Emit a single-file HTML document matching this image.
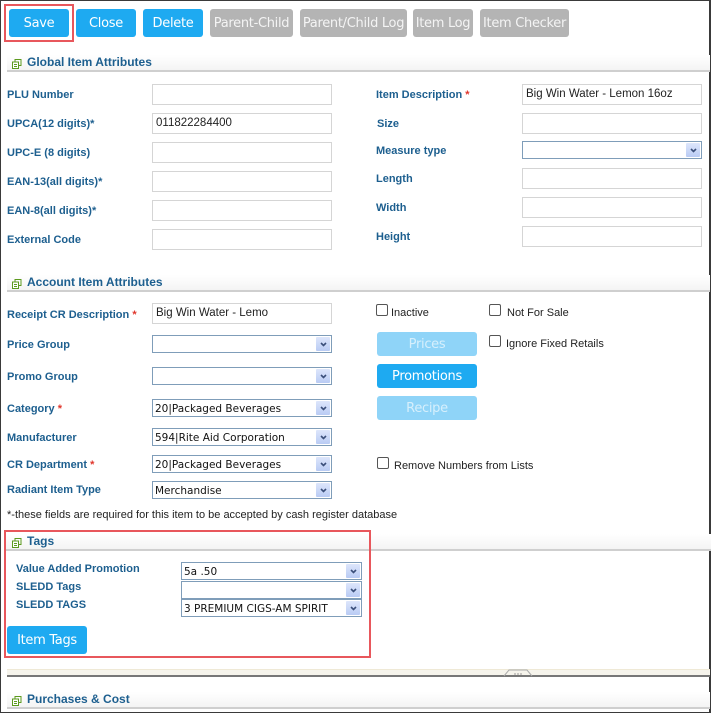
<!DOCTYPE html>
<html><head><meta charset="utf-8"><style>
*{box-sizing:border-box;margin:0;padding:0}
body{width:711px;height:713px;overflow:hidden;background:#fff;position:relative;font-family:"Liberation Sans",Arial,sans-serif}
.frame{position:absolute;left:0;top:0;width:711px;height:713px;border:1px solid #3a3a3a;border-right:2px solid #3a3a3a;border-bottom:1px solid #3a3a3a}
.a{position:absolute}
.btn{position:absolute;top:9px;height:28px;border-radius:3px;color:#fff;font-family:"DejaVu Sans","Liberation Sans",sans-serif;font-size:13px;text-align:center;line-height:30px;letter-spacing:-0.3px}
.b{background:#1eaaf1}.g{background:#b4b4b4;color:#f4f4f4}.l{background:#8fd4f8;color:#d6effc}
.hd{position:absolute;left:7px;right:1px;height:17px;background:linear-gradient(#fff,#f4f4f4);border-bottom:2px solid #cfcfcf;font-weight:bold;font-size:12px;color:#1d5f8f;padding-left:20px;line-height:15px}
.ic{position:absolute;left:5px;top:4px;width:10px;height:10px}
.lb{position:absolute;font-size:11px;font-weight:bold;color:#1d5f8f;margin-top:1px}
.lb i{color:#e0352b;font-style:normal}
.in{position:absolute;height:21px;border:1px solid #d5d5d5;font-size:11.5px;color:#222;padding:3px 0 0 3px;background:#fff}
.se{position:absolute;height:18px;border:1px solid #7f9db9;font-family:"DejaVu Sans",sans-serif;font-size:10.5px;color:#111;padding:3px 0 0 2px;background:#fff;white-space:nowrap}
.se:after{content:"";position:absolute;right:1px;top:1px;width:14px;height:14px;background:linear-gradient(#dde6fb,#b9cbf4);border-radius:1px}
.se b{position:absolute;right:4px;top:3px;width:7px;height:7px;z-index:2}
.cb{position:absolute;width:12px;height:12px;border:1px solid #555;border-radius:2px;background:#fff}
.ct{position:absolute;font-size:11px;color:#222;margin-top:1px}
</style></head><body>
<div class="frame"></div>
<div class="a" style="left:4px;top:4px;width:70px;height:38px;border:2px solid #e8575c"></div>
<div class="btn b" style="left:9px;width:60px">Save</div>
<div class="btn b" style="left:76px;width:60px">Close</div>
<div class="btn b" style="left:143px;width:60px">Delete</div>
<div class="btn g" style="left:210px;width:83px">Parent-Child</div>
<div class="btn g" style="left:300px;width:107px">Parent/Child Log</div>
<div class="btn g" style="left:413px;width:60px">Item Log</div>
<div class="btn g" style="left:480px;width:89px">Item Checker</div>

<div class="hd" style="top:55px"><svg class="ic" viewBox="0 0 10 10"><rect x="3" y="0.5" width="6" height="6" fill="none" stroke="#5c9a1e"/><rect x="0.5" y="3" width="6" height="6.5" fill="#fff" stroke="#5c9a1e"/><line x1="2" y1="5.5" x2="5" y2="5.5" stroke="#5c9a1e"/><line x1="2" y1="7.5" x2="5" y2="7.5" stroke="#5c9a1e"/></svg>Global Item Attributes</div>

<div class="lb" style="left:7px;top:88px">PLU Number</div><div class="in" style="left:152px;top:84px;width:180px"></div>
<div class="lb" style="left:7px;top:117px">UPCA(12 digits)*</div><div class="in" style="left:152px;top:113px;width:180px">011822284400</div>
<div class="lb" style="left:7px;top:146px">UPC-E (8 digits)</div><div class="in" style="left:152px;top:142px;width:180px"></div>
<div class="lb" style="left:7px;top:175px">EAN-13(all digits)*</div><div class="in" style="left:152px;top:171px;width:180px"></div>
<div class="lb" style="left:7px;top:204px">EAN-8(all digits)*</div><div class="in" style="left:152px;top:200px;width:180px"></div>
<div class="lb" style="left:7px;top:233px">External Code</div><div class="in" style="left:152px;top:229px;width:180px"></div>

<div class="lb" style="left:376px;top:88px">Item Description <i>*</i></div><div class="in" style="left:522px;top:84px;width:180px">Big Win Water - Lemon 16oz</div>
<div class="lb" style="left:377px;top:117px">Size</div><div class="in" style="left:522px;top:113px;width:180px"></div>
<div class="lb" style="left:376px;top:144px">Measure type</div><div class="se" style="left:522px;top:141px;width:180px"><b><svg viewBox="0 0 7 7"><path d="M1 2l2.5 2.5L6 2" stroke="#3b4f7a" stroke-width="1.6" fill="none"/></svg></b></div>
<div class="lb" style="left:376px;top:172px">Length</div><div class="in" style="left:522px;top:168px;width:180px"></div>
<div class="lb" style="left:376px;top:201px">Width</div><div class="in" style="left:522px;top:197px;width:180px"></div>
<div class="lb" style="left:376px;top:230px">Height</div><div class="in" style="left:522px;top:226px;width:180px"></div>

<div class="hd" style="top:275px"><svg class="ic" viewBox="0 0 10 10"><rect x="3" y="0.5" width="6" height="6" fill="none" stroke="#5c9a1e"/><rect x="0.5" y="3" width="6" height="6.5" fill="#fff" stroke="#5c9a1e"/><line x1="2" y1="5.5" x2="5" y2="5.5" stroke="#5c9a1e"/><line x1="2" y1="7.5" x2="5" y2="7.5" stroke="#5c9a1e"/></svg>Account Item Attributes</div>

<div class="lb" style="left:7px;top:308px">Receipt CR Description <i>*</i></div><div class="in" style="left:152px;top:303px;width:180px">Big Win Water - Lemo</div>
<div class="lb" style="left:7px;top:338px">Price Group</div><div class="se" style="left:152px;top:335px;width:180px"><b><svg viewBox="0 0 7 7"><path d="M1 2l2.5 2.5L6 2" stroke="#3b4f7a" stroke-width="1.6" fill="none"/></svg></b></div>
<div class="lb" style="left:7px;top:370px">Promo Group</div><div class="se" style="left:152px;top:367px;width:180px"><b><svg viewBox="0 0 7 7"><path d="M1 2l2.5 2.5L6 2" stroke="#3b4f7a" stroke-width="1.6" fill="none"/></svg></b></div>
<div class="lb" style="left:7px;top:402px">Category <i>*</i></div><div class="se" style="left:152px;top:399px;width:180px">20|Packaged Beverages<b><svg viewBox="0 0 7 7"><path d="M1 2l2.5 2.5L6 2" stroke="#3b4f7a" stroke-width="1.6" fill="none"/></svg></b></div>
<div class="lb" style="left:7px;top:431px">Manufacturer</div><div class="se" style="left:152px;top:428px;width:180px">594|Rite Aid Corporation<b><svg viewBox="0 0 7 7"><path d="M1 2l2.5 2.5L6 2" stroke="#3b4f7a" stroke-width="1.6" fill="none"/></svg></b></div>
<div class="lb" style="left:7px;top:458px">CR Department <i>*</i></div><div class="se" style="left:152px;top:455px;width:180px">20|Packaged Beverages<b><svg viewBox="0 0 7 7"><path d="M1 2l2.5 2.5L6 2" stroke="#3b4f7a" stroke-width="1.6" fill="none"/></svg></b></div>
<div class="lb" style="left:7px;top:483px">Radiant Item Type</div><div class="se" style="left:152px;top:481px;width:180px">Merchandise<b><svg viewBox="0 0 7 7"><path d="M1 2l2.5 2.5L6 2" stroke="#3b4f7a" stroke-width="1.6" fill="none"/></svg></b></div>
<div class="ct" style="left:7px;top:508px;font-size:11px">*-these fields are required for this item to be accepted by cash register database</div>

<div class="cb" style="left:376px;top:304px"></div><div class="ct" style="left:391px;top:306px">Inactive</div>
<div class="cb" style="left:489px;top:304px"></div><div class="ct" style="left:507px;top:306px">Not For Sale</div>
<div class="cb" style="left:489px;top:335px"></div><div class="ct" style="left:506px;top:337px">Ignore Fixed Retails</div>
<div class="btn l" style="left:377px;top:332px;width:100px;height:24px;line-height:26px">Prices</div>
<div class="btn b" style="left:377px;top:364px;width:100px;height:24px;line-height:26px">Promotions</div>
<div class="btn l" style="left:377px;top:396px;width:100px;height:24px;line-height:26px">Recipe</div>
<div class="cb" style="left:377px;top:457px"></div><div class="ct" style="left:394px;top:459px">Remove Numbers from Lists</div>

<div class="hd" style="top:534px;left:5px;right:0"><svg class="ic" viewBox="0 0 10 10" style="left:7px"><rect x="3" y="0.5" width="6" height="6" fill="none" stroke="#5c9a1e"/><rect x="0.5" y="3" width="6" height="6.5" fill="#fff" stroke="#5c9a1e"/><line x1="2" y1="5.5" x2="5" y2="5.5" stroke="#5c9a1e"/><line x1="2" y1="7.5" x2="5" y2="7.5" stroke="#5c9a1e"/></svg><span style="padding-left:2px">Tags</span></div>
<div class="lb" style="left:16px;top:562px">Value Added Promotion</div><div class="se" style="left:181px;top:562px;width:181px">5a .50<b><svg viewBox="0 0 7 7"><path d="M1 2l2.5 2.5L6 2" stroke="#3b4f7a" stroke-width="1.6" fill="none"/></svg></b></div>
<div class="lb" style="left:16px;top:580px">SLEDD Tags</div><div class="se" style="left:181px;top:581px;width:181px"><b><svg viewBox="0 0 7 7"><path d="M1 2l2.5 2.5L6 2" stroke="#3b4f7a" stroke-width="1.6" fill="none"/></svg></b></div>
<div class="lb" style="left:16px;top:598px">SLEDD TAGS</div><div class="se" style="left:181px;top:599px;width:181px">3 PREMIUM CIGS-AM SPIRIT<b><svg viewBox="0 0 7 7"><path d="M1 2l2.5 2.5L6 2" stroke="#3b4f7a" stroke-width="1.6" fill="none"/></svg></b></div>
<div class="btn b" style="left:7px;top:626px;width:80px;height:28px;line-height:30px">Item Tags</div>
<div class="a" style="left:4px;top:530px;width:367px;height:128px;border:2px solid #e8575c"></div>

<div class="a" style="left:7px;top:669px;width:703px;height:8px;background:#f6f4ec;border-top:1px solid #efe9d6;border-bottom:2px solid #777"></div>
<svg class="a" style="left:503px;top:669px" width="30" height="8"><path d="M1 7L6 1H24L29 7" stroke="#aaa" fill="none"/><path d="M12 4v2M15 4v2M18 4v2" stroke="#999"/></svg>

<div class="hd" style="top:692px"><svg class="ic" viewBox="0 0 10 10"><rect x="3" y="0.5" width="6" height="6" fill="none" stroke="#5c9a1e"/><rect x="0.5" y="3" width="6" height="6.5" fill="#fff" stroke="#5c9a1e"/><line x1="2" y1="5.5" x2="5" y2="5.5" stroke="#5c9a1e"/><line x1="2" y1="7.5" x2="5" y2="7.5" stroke="#5c9a1e"/></svg>Purchases &amp; Cost</div>
</body></html>
